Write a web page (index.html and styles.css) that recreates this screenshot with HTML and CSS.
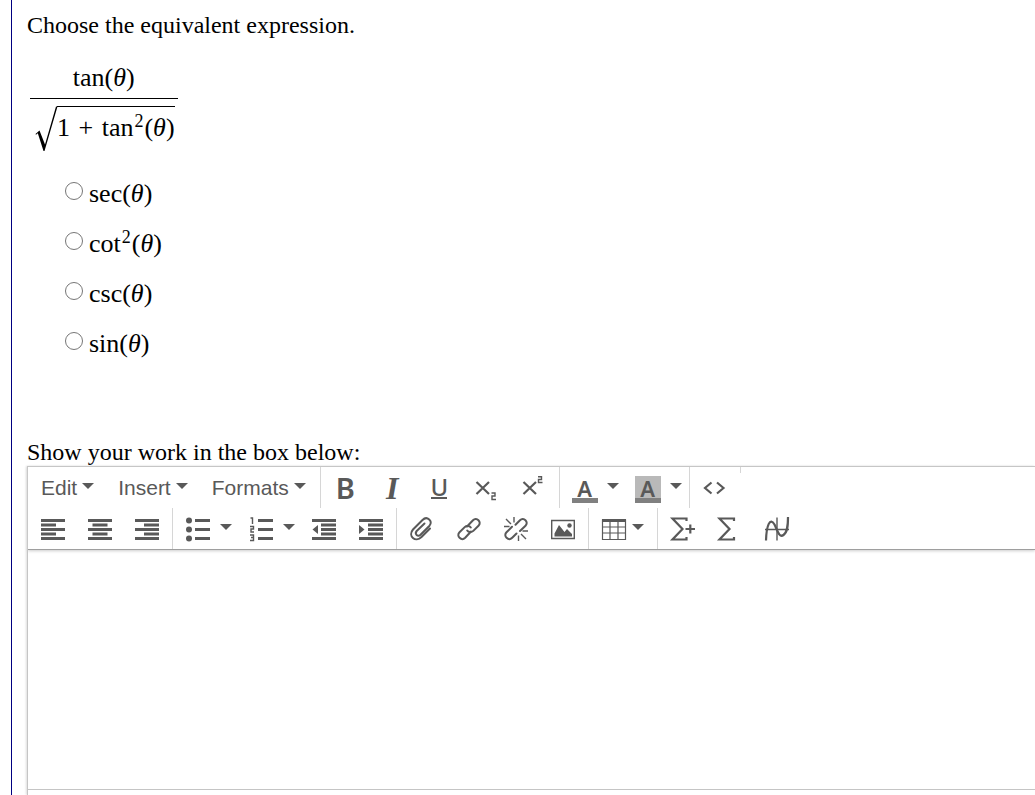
FILE: index.html
```html
<!DOCTYPE html>
<html lang="en">
<head>
<meta charset="utf-8">
<title>Equivalent expression</title>
<link rel="stylesheet" href="styles.css">
</head>
<body>
<main class="question">
  <p class="prompt">Choose the equivalent expression.</p>
  <div class="fraction math">
    <div class="numerator">tan(<i>θ</i>)</div>
    <div class="root">
      <svg class="radical" viewBox="0 0 22 46" aria-hidden="true"><path d="M.5 28 L4.5 24.5 L10 38.5 L21 .5 H22.5 L9.5 45 H8.5 L2.8 27.2 L1 28.7z" fill="#000"/></svg>
      <div class="radicand">1 <span class="plus">+</span> tan<sup>2</sup>(<i>θ</i>)</div>
    </div>
  </div>
  <div class="choices">
    <label class="choice"><input type="radio" name="answer"><span class="math">sec(<i>θ</i>)</span></label>
    <label class="choice"><input type="radio" name="answer"><span class="math">cot<sup>2</sup>(<i>θ</i>)</span></label>
    <label class="choice"><input type="radio" name="answer"><span class="math">csc(<i>θ</i>)</span></label>
    <label class="choice"><input type="radio" name="answer"><span class="math">sin(<i>θ</i>)</span></label>
  </div>
  <label class="prompt" for="work">Show your work in the box below:</label>
  <div class="editor">
    <div class="toolbar">
      <div class="row">
        <div class="group">
          <button class="menu">Edit<span class="caret"></span></button>
          <button class="menu">Insert<span class="caret"></span></button>
          <button class="menu">Formats<span class="caret"></span></button>
        </div>
        <div class="group">
          <button class="tool bold" aria-label="Bold">B</button>
          <button class="tool italic" aria-label="Italic">I</button>
          <button class="tool" aria-label="Underline"><span class="underline">U</span></button>
          <button class="tool" aria-label="Subscript"><svg viewBox="0 0 24 24"><path d="M2.5 6 L15 18 M15 6 L2.5 18" class="line"/><path d="M17.5 17h3.5v3h-3v3.5h4" class="thin"/></svg></button>
          <button class="tool" aria-label="Superscript"><svg viewBox="0 0 24 24"><path d="M2.5 6 L15 18 M15 6 L2.5 18" class="line"/><path d="M17 .8h3.5v2.7h-3v3h4" class="thin"/></svg></button>
        </div>
        <div class="group">
          <button class="split" aria-label="Text color"><span class="swatch">A</span><span class="caret"></span></button>
          <button class="split" aria-label="Background color"><span class="swatch filled">A</span><span class="caret"></span></button>
        </div>
        <div class="group short">
          <button class="tool" aria-label="Source code"><svg viewBox="0 0 24 24"><path d="M9.5 6.5 L3 12 L9.5 17.5 M15 6.5 L21.5 12 L15 17.5" class="line"/></svg></button>
        </div>
      </div>
      <div class="row">
        <div class="group">
          <button class="tool" aria-label="Align left"><svg viewBox="0 0 24 24"><path d="M0 3.5h24M0 8h15M0 12.5h24M0 17h15M0 21.5h24" class="bar"/></svg></button>
          <button class="tool" aria-label="Align center"><svg viewBox="0 0 24 24"><path d="M0 3.5h24M4.5 8h15M0 12.5h24M4.5 17h15M0 21.5h24" class="bar"/></svg></button>
          <button class="tool" aria-label="Align right"><svg viewBox="0 0 24 24"><path d="M0 3.5h24M9 8h15M0 12.5h24M9 17h15M0 21.5h24" class="bar"/></svg></button>
        </div>
        <div class="group">
          <button class="split" aria-label="Bullet list"><svg viewBox="0 0 24 24"><path d="M9 3.5h15M9 12.5h15M9 21.5h15" class="bar"/><g class="solid"><circle cx="3" cy="3.5" r="3"/><circle cx="3" cy="12.5" r="3"/><circle cx="3" cy="21.5" r="3"/></g></svg><span class="caret"></span></button>
          <button class="split" aria-label="Numbered list"><svg viewBox="0 0 24 24"><path d="M9 3.5h15M9 12.5h15M9 21.5h15" class="bar"/><path d="M1.5 1h2v6M1 9.5h3.5v2.5h-2.5v3h3M1 18h3.5v5.5h-3.5M2 20.5h2.5" class="thin"/></svg><span class="caret"></span></button>
          <button class="tool" aria-label="Decrease indent"><svg viewBox="0 0 24 24"><path d="M0 3.5h24M9 8h15M9 12.5h15M9 17h15M0 21.5h24" class="bar"/><path d="M6 8v9L.5 12.5z" class="solid"/></svg></button>
          <button class="tool" aria-label="Increase indent"><svg viewBox="0 0 24 24"><path d="M0 3.5h24M9 8h15M9 12.5h15M9 17h15M0 21.5h24" class="bar"/><path d="M0 8v9l5.5-4.5z" class="solid"/></svg></button>
        </div>
        <div class="group">
          <button class="tool" aria-label="Attach"><svg viewBox="0 0 24 24"><path d="M20 11.5 L11.5 20 C5.5 26 -2.5 19 3 12.5 L12.5 3 C17 -1.5 23.5 4 19.5 8.7 L10.5 17.8 C7.8 20.2 4.2 17 6.7 14 L14.5 6.5" class="clip"/></svg></button>
          <button class="tool" aria-label="Insert link"><svg viewBox="0 0 24 24"><g class="clip"><path d="M10 9.5 L16 3.2 C19.5 -.5 25.2 5 21.5 8.7 L16.3 13.9 C14.5 15.7 11.5 15.4 10.2 13.5"/><path d="M14 14.5 L8.2 20.8 C4.5 24.5 -1.2 19 2.5 15.3 L7.7 10.1 C9.5 8.3 12.5 8.6 13.8 10.5"/></g></svg></button>
          <button class="tool" aria-label="Remove link"><svg viewBox="0 0 24 24"><path d="M11.5 7.8 L16 3.2 C19.5 -.5 25.2 5 21.5 8.7 L16 14M12.5 16.5 L8.2 20.8 C4.5 24.5 -1.2 19 2.5 15.3 L8 9.8" class="clip"/><path d="M0 9.5h5.5M2 2l5 5M10 0v5.5M24 14h-5.5M22 22l-5-5M14.5 18.5V24" class="thin"/></svg></button>
          <button class="tool" aria-label="Insert image"><svg viewBox="0 0 24 24"><path d="M.7 3.5h22.6v18H.7z" class="thin"/><path d="M3.5 19.5v-3L8 8l5.5 7 2.5-3 5 5v2.5z" class="solid"/><circle cx="18.5" cy="8.5" r="2.2" class="solid"/></svg></button>
        </div>
        <div class="group">
          <button class="split table" aria-label="Table"><svg viewBox="0 0 24 24"><path d="M.5 3h23v19.5H.5zM.5 10h23M.5 16h23M8 4v18M16 4v18" class="grid"/><path d="M0 2h24v3H0z" class="solid"/></svg><span class="caret"></span></button>
        </div>
        <div class="group last">
          <button class="tool" aria-label="Insert equation"><svg viewBox="0 0 24 24"><path d="M15.5 4V1.5H1.5L11.5 12 1.5 22.5h14V20" class="line"/><path d="M14.5 12h9.5M19.3 7.5v9" class="line"/></svg></button>
          <button class="tool" aria-label="Equation"><svg viewBox="0 0 24 24"><path d="M16 4V1.5H1.5L11.5 12 1.5 22.5H16V20" class="line"/></svg></button>
          <button class="tool" aria-label="Graph"><svg viewBox="0 0 24 24"><path d="M1 23.5 C1.5 8 5 0 9.5 7.5 C13 15 14.5 21 18.5 18 C22.5 15 23 9 23 0" class="line"/><path d="M0 12.5h24M12 .5v23" class="thin"/></svg></button>
        </div>
      </div>
    </div>
    <textarea id="work" class="work"></textarea>
    <div class="status"></div>
  </div>
</main>
</body>
</html>
```
FILE: styles.css
```css
* { box-sizing: border-box; }
body { margin: 0; background: #fff; }
.question {
  display: flex;
  flex-direction: column;
  min-height: 100vh;
  margin-left: 11px;
  padding: 11px 0 0 15px;
  border-left: 1px solid #000080;
  color: #000;
  font: 24px/28px "Liberation Serif", serif;
}
.prompt { display: block; margin: 0; }
.math { font-size: 26px; line-height: 30px; white-space: nowrap; }
.math sup { font-size: 18px; line-height: 0; vertical-align: 9px; padding: 0 1px; }
.plus { padding: 0 2px; }
.fraction { align-self: flex-start; margin: 24px 0 0 3px; }
.numerator { padding-bottom: 5px; text-align: center; border-bottom: 1px solid #000; }
.root { display: flex; padding: 7px 3px 0 5px; }
.radical { flex: none; width: 22px; height: 46px; }
.radicand { height: 38px; padding-top: 6px; border-top: 1px solid #000; }
.choices { display: flex; flex-direction: column; gap: 20px; margin: 27px 0 79px 38px; }
.choice { display: flex; gap: 6px; align-items: flex-start; }
.choice input { width: 18px; height: 18px; margin: 3px 0 0; }

.editor {
  display: flex;
  flex: 1;
  flex-direction: column;
  border: solid #c5c5c5;
  border-width: 1px 0 0 1px;
  box-shadow: -1px 0 2px #ddd;
}
.toolbar {
  position: relative;
  border-bottom: 1px solid #9e9e9e;
  box-shadow: 0 1px 3px #ccc;
  font: 21px/24px "Liberation Sans", sans-serif;
}
.row { display: flex; height: 41px; }
.group { display: flex; padding: 0 2px 0 1px; border-right: 1px solid #d6d6d6; }
.group.last { border: 0; }
.group.short { border-right-color: transparent; background: linear-gradient(#d6d6d6, #d6d6d6) right top / 1px 6px no-repeat border-box; }
button {
  display: flex;
  align-items: center;
  height: 41px;
  padding: 0 12px;
  border: 0;
  background: none;
  color: #595959;
  font: inherit;
}
.menu { gap: 5px; }
.tool { justify-content: center; width: 47px; padding: 0; }
.split { gap: 10px; padding-right: 5px; }
.split.table { gap: 6px; padding-right: 11px; }
.caret { border: solid transparent; border-width: 6px 6px 0; border-top-color: #595959; margin-bottom: 4px; }
.bold { font: 600 29px/28px "Noto Sans", sans-serif; }
.italic { font: italic bold 32px/28px "Liberation Serif", serif; }
.underline { width: 16px; border-bottom: 2px solid #595959; font: 500 24px/20px "Noto Sans", sans-serif; display: flex; justify-content: center; }
.swatch { width: 26px; height: 27px; margin: 4px -1px 0; border-bottom: 5px solid #808080; font: 600 22px/24px "Noto Sans", sans-serif; }
.filled { background: #b9b9b9; }
svg { display: block; flex: none; width: 24px; height: 24px; overflow: visible; fill: none; }
.line { stroke: #595959; stroke-width: 2.2; }
.thin { stroke: #595959; stroke-width: 1.4; }
.clip { stroke: #595959; stroke-width: 2; stroke-linecap: round; }
.grid { stroke: #595959; stroke-width: 1.2; }
.bar { stroke: #595959; stroke-width: 3; }
.solid { fill: #595959; }
.work {
  flex: 1;
  width: 100%;
  min-height: 200px;
  padding: 12px;
  border: 0;
  outline: 0;
  resize: none;
  background: #fff;
  font: 24px/28px "Liberation Serif", serif;
}
.status { height: 6px; border-top: 1px solid #c5c5c5; }
```
